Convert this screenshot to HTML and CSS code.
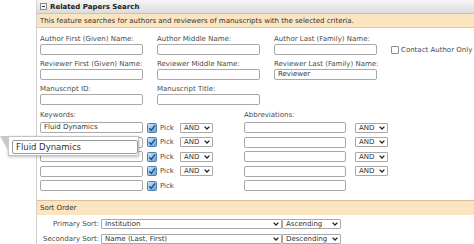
FILE: index.html
```html
<!DOCTYPE html>
<html lang="en">
<head>
  <meta charset="UTF-8" />
  <title>Related Papers Search</title>
  <link rel="stylesheet" href="styles.css">
</head>
<body>
  <div class="panel">
    <div class="panel-head">
      <span class="toggle"></span>
      <span>Related Papers Search</span>
    </div>
    <div class="notice">This feature searches for authors and reviewers of manuscripts with the selected criteria.</div>

    <div class="fields">
      <div class="field">
        <label>Author First (Given) Name:</label>
        <div class="text-box"></div>
      </div>
      <div class="field">
        <label>Author Middle Name:</label>
        <div class="text-box"></div>
      </div>
      <div class="field">
        <label>Author Last (Family) Name:</label>
        <div class="text-box"></div>
      </div>
      <div class="field contact">
        <label>&nbsp;</label>
        <div class="check-line"><span class="check-box"></span>Contact Author Only</div>
      </div>

      <div class="field">
        <label>Reviewer First (Given) Name:</label>
        <div class="text-box"></div>
      </div>
      <div class="field">
        <label>Reviewer Middle Name:</label>
        <div class="text-box"></div>
      </div>
      <div class="field">
        <label>Reviewer Last (Family) Name:</label>
        <div class="text-box">Reviewer</div>
      </div>
      <div class="field"></div>

      <div class="field">
        <label>Manuscript ID:</label>
        <div class="text-box"></div>
      </div>
      <div class="field">
        <label>Manuscript Title:</label>
        <div class="text-box"></div>
      </div>
    </div>

    <div class="lists">
      <div class="list keywords">
        <label>Keywords:</label>
        <div class="list-row">
          <div class="text-box">Fluid Dynamics</div>
          <span class="pick"><svg width="10" height="10" viewBox="0 0 10 10"><defs><linearGradient id="pg" x1="0" y1="0" x2="1" y2="1"><stop offset="0" stop-color="#d4e8f8"/><stop offset="1" stop-color="#5e9fd6"/></linearGradient></defs><rect x="0.5" y="0.5" width="9" height="9" rx="1" fill="url(#pg)" stroke="#4f7ea8"/><path d="M2.3 5.3 L4.2 7.4 L8 2.4" fill="none" stroke="#1d4f8c" stroke-width="1.4"/></svg>Pick</span>
          <div class="drop small">AND<svg class="chev" width="6" height="4" viewBox="0 0 6 4"><path d="M0.6 0.6 L3 3 L5.4 0.6" fill="none" stroke="#222" stroke-width="1.3"/></svg></div>
        </div>
        <div class="list-row">
          <div class="text-box"></div>
          <span class="pick"><svg width="10" height="10" viewBox="0 0 10 10"><rect x="0.5" y="0.5" width="9" height="9" rx="1" fill="url(#pg)" stroke="#4f7ea8"/><path d="M2.3 5.3 L4.2 7.4 L8 2.4" fill="none" stroke="#1d4f8c" stroke-width="1.4"/></svg>Pick</span>
          <div class="drop small">AND<svg class="chev" width="6" height="4" viewBox="0 0 6 4"><path d="M0.6 0.6 L3 3 L5.4 0.6" fill="none" stroke="#222" stroke-width="1.3"/></svg></div>
        </div>
        <div class="list-row">
          <div class="text-box"></div>
          <span class="pick"><svg width="10" height="10" viewBox="0 0 10 10"><rect x="0.5" y="0.5" width="9" height="9" rx="1" fill="url(#pg)" stroke="#4f7ea8"/><path d="M2.3 5.3 L4.2 7.4 L8 2.4" fill="none" stroke="#1d4f8c" stroke-width="1.4"/></svg>Pick</span>
          <div class="drop small">AND<svg class="chev" width="6" height="4" viewBox="0 0 6 4"><path d="M0.6 0.6 L3 3 L5.4 0.6" fill="none" stroke="#222" stroke-width="1.3"/></svg></div>
        </div>
        <div class="list-row">
          <div class="text-box"></div>
          <span class="pick"><svg width="10" height="10" viewBox="0 0 10 10"><rect x="0.5" y="0.5" width="9" height="9" rx="1" fill="url(#pg)" stroke="#4f7ea8"/><path d="M2.3 5.3 L4.2 7.4 L8 2.4" fill="none" stroke="#1d4f8c" stroke-width="1.4"/></svg>Pick</span>
          <div class="drop small">AND<svg class="chev" width="6" height="4" viewBox="0 0 6 4"><path d="M0.6 0.6 L3 3 L5.4 0.6" fill="none" stroke="#222" stroke-width="1.3"/></svg></div>
        </div>
        <div class="list-row">
          <div class="text-box"></div>
          <span class="pick"><svg width="10" height="10" viewBox="0 0 10 10"><rect x="0.5" y="0.5" width="9" height="9" rx="1" fill="url(#pg)" stroke="#4f7ea8"/><path d="M2.3 5.3 L4.2 7.4 L8 2.4" fill="none" stroke="#1d4f8c" stroke-width="1.4"/></svg>Pick</span>
        </div>
      </div>

      <div class="list abbrevs">
        <label>Abbreviations:</label>
        <div class="list-row">
          <div class="text-box"></div>
          <div class="drop small">AND<svg class="chev" width="6" height="4" viewBox="0 0 6 4"><path d="M0.6 0.6 L3 3 L5.4 0.6" fill="none" stroke="#222" stroke-width="1.3"/></svg></div>
        </div>
        <div class="list-row">
          <div class="text-box"></div>
          <div class="drop small">AND<svg class="chev" width="6" height="4" viewBox="0 0 6 4"><path d="M0.6 0.6 L3 3 L5.4 0.6" fill="none" stroke="#222" stroke-width="1.3"/></svg></div>
        </div>
        <div class="list-row">
          <div class="text-box"></div>
          <div class="drop small">AND<svg class="chev" width="6" height="4" viewBox="0 0 6 4"><path d="M0.6 0.6 L3 3 L5.4 0.6" fill="none" stroke="#222" stroke-width="1.3"/></svg></div>
        </div>
        <div class="list-row">
          <div class="text-box"></div>
          <div class="drop small">AND<svg class="chev" width="6" height="4" viewBox="0 0 6 4"><path d="M0.6 0.6 L3 3 L5.4 0.6" fill="none" stroke="#222" stroke-width="1.3"/></svg></div>
        </div>
        <div class="list-row">
          <div class="text-box"></div>
        </div>
      </div>
    </div>

    <div class="notice sort-head">Sort Order</div>
    <div class="sorts">
      <div class="sort-row">
        <span class="sort-label">Primary Sort:</span>
        <div class="drop wide">Institution<svg class="chev" width="6" height="4" viewBox="0 0 6 4"><path d="M0.6 0.6 L3 3 L5.4 0.6" fill="none" stroke="#222" stroke-width="1.3"/></svg></div>
        <div class="drop order">Ascending<svg class="chev" width="6" height="4" viewBox="0 0 6 4"><path d="M0.6 0.6 L3 3 L5.4 0.6" fill="none" stroke="#222" stroke-width="1.3"/></svg></div>
      </div>
      <div class="sort-row">
        <span class="sort-label">Secondary Sort:</span>
        <div class="drop wide">Name (Last, First)<svg class="chev" width="6" height="4" viewBox="0 0 6 4"><path d="M0.6 0.6 L3 3 L5.4 0.6" fill="none" stroke="#222" stroke-width="1.3"/></svg></div>
        <div class="drop order">Descending<svg class="chev" width="6" height="4" viewBox="0 0 6 4"><path d="M0.6 0.6 L3 3 L5.4 0.6" fill="none" stroke="#222" stroke-width="1.3"/></svg></div>
      </div>
    </div>
  </div>

  <!-- autocomplete popup over the keyword list -->
  <div class="suggest">
    <svg class="suggest-tail" width="9" height="16" viewBox="0 0 9 16"><polygon points="0,0 9,0 9,16" fill="#c9c9c9"/></svg>
    <div class="suggest-item">Fluid Dynamics</div>
  </div>
</body>
</html>
```

FILE: styles.css
```css
* { box-sizing: border-box; }

body {
  margin: 0;
  width: 474px;
  height: 244px;
  overflow: hidden;
  background: #fff;
  font-family: "DejaVu Sans", Verdana, sans-serif;
  font-size: 7px;
  color: #4a4a4a;
  position: relative;
}

.panel {
  margin-left: 36px;
  width: 460px;
  border-left: 1px solid #d0d0d0;
}

.panel-head {
  height: 14px;
  display: flex;
  align-items: center;
  gap: 3px;
  padding-left: 3px;
  background: linear-gradient(#f6f6f6, #dcdcdc);
  border-bottom: 1px solid #c4c4c4;
  font-weight: bold;
  color: #222;
}

.toggle {
  width: 7px;
  height: 7px;
  border: 1px solid #8a8a8a;
  background: #fafafa;
  position: relative;
}

.toggle::after {
  content: "";
  position: absolute;
  left: 1px; right: 1px; top: 2px;
  height: 1px;
  background: #333;
}

.notice {
  height: 14px;
  display: flex;
  align-items: center;
  padding-left: 3px;
  background: #fbe4c0;
  border-bottom: 1px solid #e3c89c;
  color: #333;
}

.fields {
  display: grid;
  grid-template-columns: 117px 117px 117px auto;
  row-gap: 4px;
  padding: 6px 0 0 3px;
}

label {
  display: block;
  height: 10px;
  line-height: 10px;
}

.text-box {
  width: 103px;
  height: 11px;
  line-height: 9px;
  padding-left: 3px;
  border: 1px solid #a8a8a8;
  border-radius: 2px;
  background: #fff;
  color: #333;
  white-space: nowrap;
  overflow: hidden;
}

.check-line {
  height: 11px;
  display: flex;
  align-items: center;
  gap: 2px;
}

.check-box {
  width: 8px;
  height: 8px;
  border: 1px solid #8f8f8f;
  border-radius: 1px;
  background: #fff;
}

.lists {
  display: flex;
  padding: 5px 0 0 3px;
}

.list label { margin-bottom: 2px; }

.keywords { width: 204px; }

.list-row {
  display: flex;
  align-items: center;
  height: 11px;
  margin-bottom: 3.5px;
}

.pick {
  display: flex;
  align-items: center;
  gap: 3px;
  margin-left: 4px;
  width: 33px;
}

.drop {
  height: 10px;
  display: flex;
  align-items: center;
  justify-content: space-between;
  padding: 0 2px 0 3px;
  border: 1px solid #a8a8a8;
  border-radius: 1px;
  background: #fff;
  color: #333;
  white-space: nowrap;
}

.drop.small { width: 33px; }

.abbrevs .text-box { width: 102px; }
.abbrevs .drop { margin-left: 9px; }

.sort-head {
  margin-top: 5px;
  border-top: 1px solid #dcbf94;
  border-bottom: none;
  height: 15px;
}

.sorts { padding-top: 4px; }

.sort-row {
  display: flex;
  align-items: center;
  height: 10px;
  margin-bottom: 5px;
}

.sort-label {
  width: 62px;
  text-align: right;
  margin-right: 2px;
}

.drop.wide { width: 181px; }
.drop.order { width: 59px; }

.suggest {
  position: absolute;
  left: 8px;
  top: 136px;
  width: 131px;
  height: 20px;
  background: #fff;
  border: 1px solid #c2c2c2;
  box-shadow: 0 1px 3px rgba(0, 0, 0, 0.25);
  padding: 3px 0 0 3px;
}

.suggest-tail {
  position: absolute;
  left: -9px;
  top: -1px;
}

.suggest-item {
  height: 14px;
  line-height: 12px;
  padding-left: 3px;
  border: 1px solid #9a9a9a;
  border-radius: 2px;
  font-size: 8.5px;
  color: #333;
}
```
